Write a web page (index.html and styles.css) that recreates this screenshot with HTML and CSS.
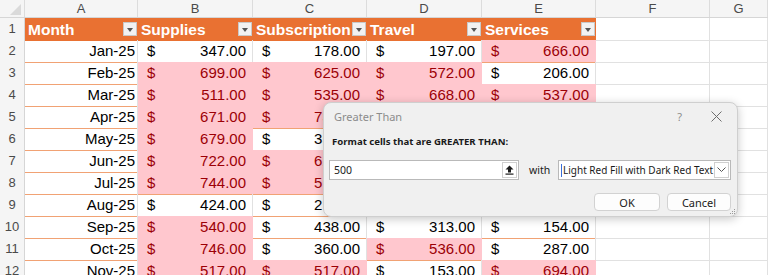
FILE: index.html
```html
<!DOCTYPE html>
<html lang="en">
<head>
  <meta charset="UTF-8">
  <title>Greater Than</title>
  <link rel="stylesheet" href="styles.css">
</head>
<body>
  <div class="sheet">
    <div class="row colhead">
      <div class="corner"><span class="tri"></span></div>
      <div>A</div><div>B</div><div>C</div><div>D</div><div>E</div><div>F</div><div>G</div>
    </div>

    <div class="row">
      <div class="rownum">1</div>
      <div class="c th">Month<span class="filter"></span></div>
      <div class="c th">Supplies<span class="filter"></span></div>
      <div class="c th">Subscription<span class="filter"></span></div>
      <div class="c th">Travel<span class="filter"></span></div>
      <div class="c th">Services<span class="filter"></span></div>
      <div class="c"></div><div class="c"></div>
    </div>

    <div class="row">
      <div class="rownum">2</div>
      <div class="c t date">Jan-25</div>
      <div class="c t cur"><span>$</span><span>347.00</span></div>
      <div class="c t cur"><span>$</span><span>178.00</span></div>
      <div class="c t cur"><span>$</span><span>197.00</span></div>
      <div class="c t cur hl"><span>$</span><span>666.00</span></div>
      <div class="c"></div><div class="c"></div>
    </div>

    <div class="row">
      <div class="rownum">3</div>
      <div class="c t date">Feb-25</div>
      <div class="c t cur hl"><span>$</span><span>699.00</span></div>
      <div class="c t cur hl"><span>$</span><span>625.00</span></div>
      <div class="c t cur hl"><span>$</span><span>572.00</span></div>
      <div class="c t cur"><span>$</span><span>206.00</span></div>
      <div class="c"></div><div class="c"></div>
    </div>

    <div class="row">
      <div class="rownum">4</div>
      <div class="c t date">Mar-25</div>
      <div class="c t cur hl"><span>$</span><span>511.00</span></div>
      <div class="c t cur hl"><span>$</span><span>535.00</span></div>
      <div class="c t cur hl"><span>$</span><span>668.00</span></div>
      <div class="c t cur hl"><span>$</span><span>537.00</span></div>
      <div class="c"></div><div class="c"></div>
    </div>

    <div class="row">
      <div class="rownum">5</div>
      <div class="c t date">Apr-25</div>
      <div class="c t cur hl"><span>$</span><span>671.00</span></div>
      <div class="c t cur hl"><span>$</span><span>735.00</span></div>
      <div class="c t cur hl"><span>$</span><span>588.00</span></div>
      <div class="c t cur"><span>$</span><span>312.00</span></div>
      <div class="c"></div><div class="c"></div>
    </div>

    <div class="row">
      <div class="rownum">6</div>
      <div class="c t date">May-25</div>
      <div class="c t cur hl"><span>$</span><span>679.00</span></div>
      <div class="c t cur"><span>$</span><span>351.00</span></div>
      <div class="c t cur"><span>$</span><span>244.00</span></div>
      <div class="c t cur hl"><span>$</span><span>603.00</span></div>
      <div class="c"></div><div class="c"></div>
    </div>

    <div class="row">
      <div class="rownum">7</div>
      <div class="c t date">Jun-25</div>
      <div class="c t cur hl"><span>$</span><span>722.00</span></div>
      <div class="c t cur hl"><span>$</span><span>621.00</span></div>
      <div class="c t cur"><span>$</span><span>402.00</span></div>
      <div class="c t cur"><span>$</span><span>187.00</span></div>
      <div class="c"></div><div class="c"></div>
    </div>

    <div class="row">
      <div class="rownum">8</div>
      <div class="c t date">Jul-25</div>
      <div class="c t cur hl"><span>$</span><span>744.00</span></div>
      <div class="c t cur hl"><span>$</span><span>518.00</span></div>
      <div class="c t cur hl"><span>$</span><span>655.00</span></div>
      <div class="c t cur"><span>$</span><span>279.00</span></div>
      <div class="c"></div><div class="c"></div>
    </div>

    <div class="row">
      <div class="rownum">9</div>
      <div class="c t date">Aug-25</div>
      <div class="c t cur"><span>$</span><span>424.00</span></div>
      <div class="c t cur"><span>$</span><span>214.00</span></div>
      <div class="c t cur"><span>$</span><span>366.00</span></div>
      <div class="c t cur hl"><span>$</span><span>581.00</span></div>
      <div class="c"></div><div class="c"></div>
    </div>

    <div class="row">
      <div class="rownum">10</div>
      <div class="c t date">Sep-25</div>
      <div class="c t cur hl"><span>$</span><span>540.00</span></div>
      <div class="c t cur"><span>$</span><span>438.00</span></div>
      <div class="c t cur"><span>$</span><span>313.00</span></div>
      <div class="c t cur"><span>$</span><span>154.00</span></div>
      <div class="c"></div><div class="c"></div>
    </div>

    <div class="row">
      <div class="rownum">11</div>
      <div class="c t date">Oct-25</div>
      <div class="c t cur hl"><span>$</span><span>746.00</span></div>
      <div class="c t cur"><span>$</span><span>360.00</span></div>
      <div class="c t cur hl"><span>$</span><span>536.00</span></div>
      <div class="c t cur"><span>$</span><span>287.00</span></div>
      <div class="c"></div><div class="c"></div>
    </div>

    <div class="row">
      <div class="rownum">12</div>
      <div class="c t date">Nov-25</div>
      <div class="c t cur hl"><span>$</span><span>517.00</span></div>
      <div class="c t cur hl"><span>$</span><span>517.00</span></div>
      <div class="c t cur"><span>$</span><span>153.00</span></div>
      <div class="c t cur hl"><span>$</span><span>694.00</span></div>
      <div class="c"></div><div class="c"></div>
    </div>
  </div>

  <!-- conditional formatting dialog -->
  <div class="dialog">
    <div class="dlg-title">
      <span class="caption">Greater Than</span>
      <span class="help">?</span>
      <svg class="close" width="11" height="11" viewBox="0 0 11 11">
        <path d="M0.5 0.5 L10.5 10.5 M10.5 0.5 L0.5 10.5" stroke="#6e6e6e" stroke-width="1" fill="none"/>
      </svg>
    </div>
    <div class="dlg-label">Format cells that are GREATER THAN:</div>
    <div class="dlg-inputs">
      <div class="field">
        <span class="value">500</span>
        <span class="pick">
          <svg width="9" height="10" viewBox="0 0 9 10">
            <path d="M4.5 0.5 L0.5 4.5 H3 V7.5 H6 V4.5 H8.5 Z" fill="#1a1a1a"/>
            <rect x="0.5" y="8.5" width="8" height="1.2" fill="#1a1a1a"/>
          </svg>
        </span>
      </div>
      <span class="with">with</span>
      <div class="select">
        <span class="value"><span class="caret"></span>Light Red Fill with Dark Red Text</span>
        <span class="drop">
          <svg width="9" height="6" viewBox="0 0 9 6">
            <path d="M0.5 0.5 L4.5 4.5 L8.5 0.5" stroke="#555" stroke-width="1" fill="none"/>
          </svg>
        </span>
      </div>
    </div>
    <div class="dlg-buttons">
      <button class="btn ok">OK</button>
      <button class="btn cancel">Cancel</button>
    </div>
    <svg class="grip" width="7" height="7" viewBox="0 0 7 7">
      <rect x="5" y="1" width="1" height="1" fill="#9a9a9a"/>
      <rect x="3" y="3" width="1" height="1" fill="#9a9a9a"/>
      <rect x="5" y="3" width="1" height="1" fill="#9a9a9a"/>
      <rect x="1" y="5" width="1" height="1" fill="#9a9a9a"/>
      <rect x="3" y="5" width="1" height="1" fill="#9a9a9a"/>
      <rect x="5" y="5" width="1" height="1" fill="#9a9a9a"/>
    </svg>
  </div>
</body>
</html>
```

FILE: styles.css
```css
body {
  margin: 0;
  background: #fff;
  font-family: "Liberation Sans", Arial, sans-serif;
  color: #000;
  overflow: hidden;
}

.sheet {
  width: 768px;
}

.row {
  display: grid;
  grid-template-columns: 25px 113px 115px 114px 115px 114px 114px 1fr;
  height: 22px;
}

/* column letters */
.colhead {
  height: 18px;
  background: #f5f5f5;
  border-bottom: 1px solid #d6d6d6;
  box-sizing: border-box;
}
.colhead div {
  border-right: 1px solid #dcdcdc;
  font-size: 13px;
  color: #4a4a4a;
  text-align: center;
  line-height: 17px;
}
.corner {
  position: relative;
}
.corner .tri {
  position: absolute;
  right: 3px;
  bottom: 2px;
  width: 0;
  height: 0;
  border-left: 11px solid transparent;
  border-bottom: 11px solid #dadada;
}

.rownum {
  background: #f5f5f5;
  border-right: 1px solid #d6d6d6;
  border-bottom: 1px solid #e4e4e4;
  font-size: 13px;
  color: #4a4a4a;
  text-align: center;
  line-height: 22px;
}

.c {
  box-sizing: border-box;
  border-right: 1px solid #e1e1e1;
  border-bottom: 1px solid #e1e1e1;
  font-size: 15px;
  line-height: 21px;
  white-space: nowrap;
  overflow: hidden;
}

/* table header */
.th {
  background: #e97132;
  color: #fff;
  font-weight: bold;
  font-size: 15.5px;
  border-right-color: #e97132;
  border-bottom-color: #e97132;
  padding-left: 3px;
  display: flex;
  align-items: center;
  justify-content: space-between;
}
.filter {
  width: 14px;
  height: 14px;
  box-sizing: border-box;
  background: #f2f2f2;
  border: 1px solid #c9c9c9;
  position: relative;
  flex: none;
}
.filter::after {
  content: "";
  position: absolute;
  left: 3px;
  top: 5px;
  border-left: 3.5px solid transparent;
  border-right: 3.5px solid transparent;
  border-top: 4px solid #555;
}

/* table body */
.t {
  border-bottom: 1px solid #f1a274;
}
.date {
  text-align: right;
  padding-right: 2px;
}
.cur {
  display: flex;
  justify-content: space-between;
  padding: 0 6px 0 9px;
}
.hl {
  background: #ffc7ce;
  color: #9c0006;
  border-right-color: #ffc7ce;
}

/* dialog */
.dialog {
  position: absolute;
  left: 323px;
  top: 102px;
  width: 415px;
  height: 115px;
  box-sizing: border-box;
  background: #f0f0f0;
  border: 1px solid #cfcfcf;
  border-radius: 8px;
  box-shadow: 0 2px 10px rgba(0, 0, 0, 0.22);
  font-family: "Noto Sans", "Open Sans", sans-serif;
  font-size: 10px;
  color: #1a1a1a;
}
.dlg-title {
  display: flex;
  align-items: center;
  height: 27px;
  padding: 0 0 0 10px;
}
.caption {
  color: #8c8c8c;
  font-size: 11px;
  flex: 1;
}
.help {
  color: #8c8c8c;
  font-size: 11px;
  margin-right: 29px;
}
.close {
  margin-right: 15px;
}
.dlg-label {
  font-weight: bold;
  font-size: 9.6px;
  padding-left: 8px;
  margin-top: 2px;
  line-height: 20px;
}
.dlg-inputs {
  display: flex;
  align-items: center;
  margin-top: 8px;
  padding-left: 5px;
}
.field {
  width: 190px;
  height: 20px;
  box-sizing: border-box;
  background: #fff;
  border: 1px solid #b9b9b9;
  display: flex;
  align-items: center;
  justify-content: space-between;
  padding-left: 4px;
  font-size: 10.5px;
}
.pick {
  width: 15px;
  height: 16px;
  box-sizing: border-box;
  border: 1px solid #cfcfcf;
  margin-right: 1px;
  display: flex;
  align-items: center;
  justify-content: center;
}
.with {
  margin-left: 10px;
  width: 29px;
  font-size: 10.5px;
}
.select {
  width: 173px;
  height: 20px;
  box-sizing: border-box;
  background: #fff;
  border: 1px solid #b9b9b9;
  display: flex;
  align-items: center;
  justify-content: space-between;
  padding-left: 2px;
}
.select .value {
  display: flex;
  align-items: center;
  white-space: nowrap;
}
.caret {
  width: 1px;
  height: 13px;
  background: #3a6fd8;
  margin-right: 1px;
}
.drop {
  width: 15px;
  height: 16px;
  box-sizing: border-box;
  border: 1px solid #cfcfcf;
  margin-right: 1px;
  display: flex;
  align-items: center;
  justify-content: center;
}
.dlg-buttons {
  display: flex;
  justify-content: flex-end;
  gap: 7px;
  margin-top: 13px;
  padding-right: 6px;
}
.btn {
  height: 18px;
  background: #fdfdfd;
  border: 1px solid #d2d2d2;
  border-radius: 4px;
  font-family: "Noto Sans", "Open Sans", sans-serif;
  font-size: 11px;
  color: #1a1a1a;
  padding: 0;
  line-height: 15px;
}
.ok {
  width: 66px;
}
.cancel {
  width: 64px;
}
.grip {
  position: absolute;
  right: 1px;
  bottom: 1px;
}
```
